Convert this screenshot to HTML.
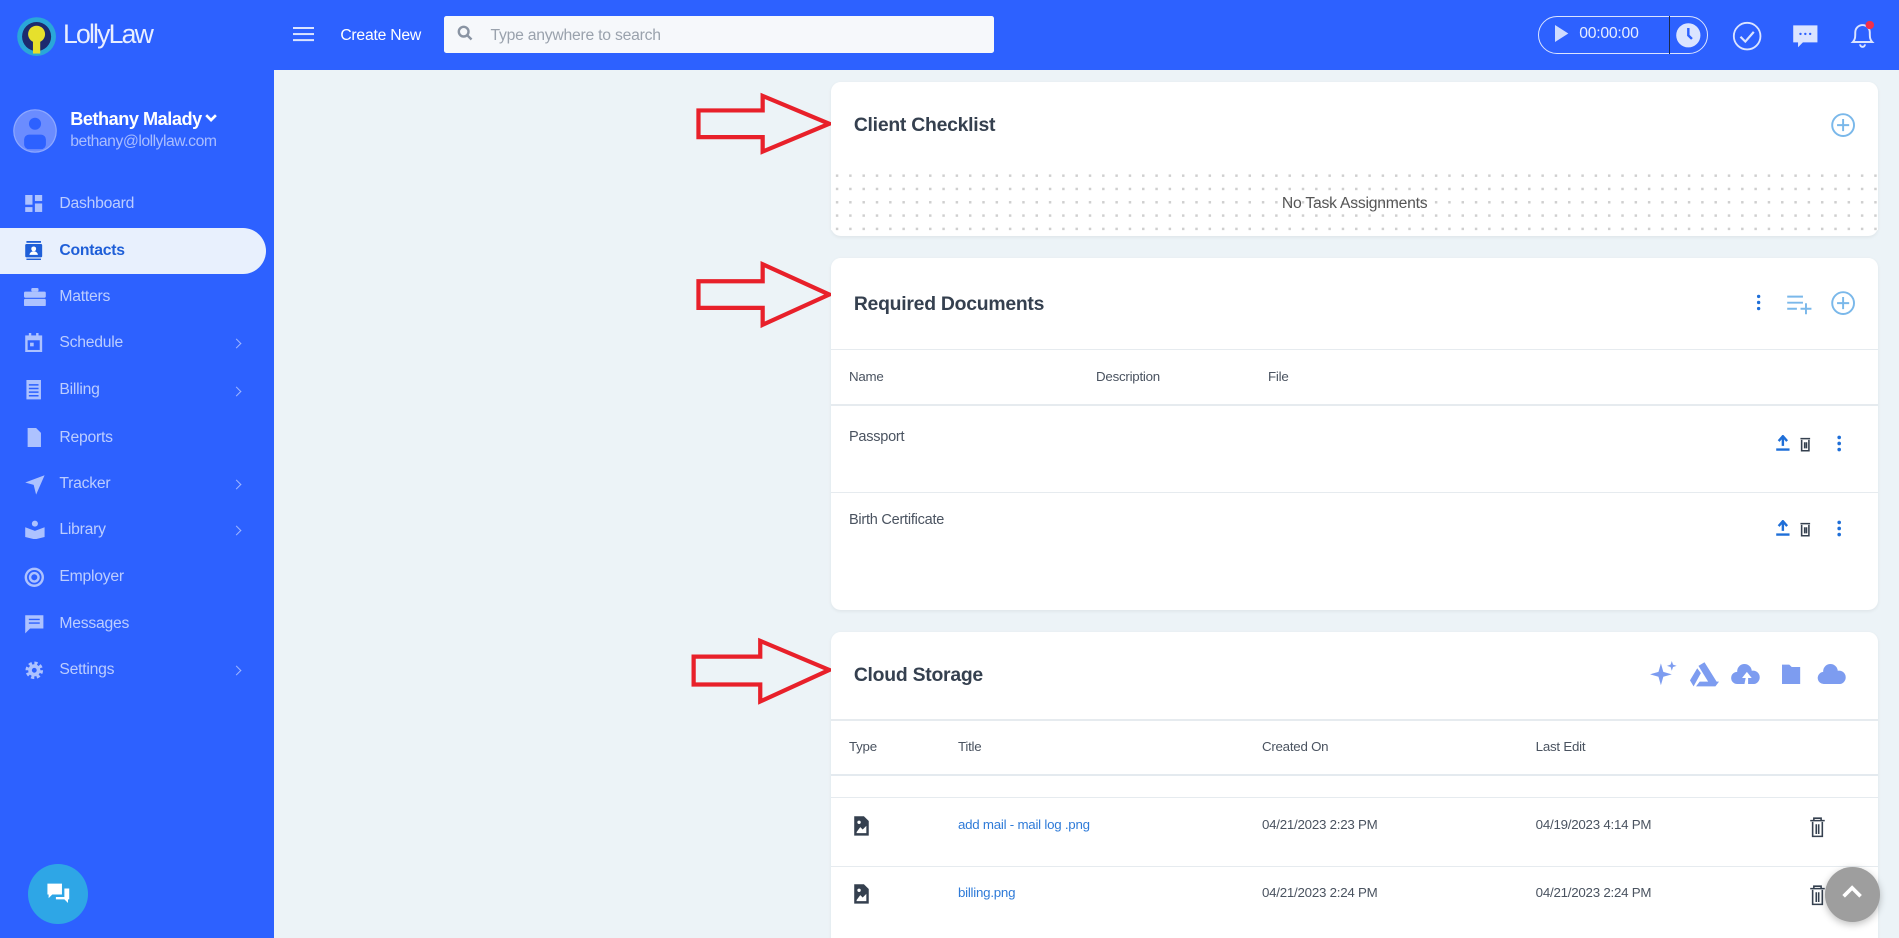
<!DOCTYPE html>
<html><head><meta charset="utf-8"><style>
html,body{margin:0;padding:0;width:1899px;height:938px;overflow:hidden;background:#ecf3f7;}
#w{zoom:1.2111;width:1568px;height:775px;position:relative;font-family:"Liberation Sans",sans-serif;overflow:hidden;background:#ecf3f7;letter-spacing:-0.2px}
.a{position:absolute}
.hdr{left:0;top:0;width:1568px;height:58px;background:#2d61ff}
.sb{left:0;top:58px;width:226px;height:717px;background:#2d61ff}
.mi{position:absolute;left:49px;font-size:13px;color:#bccdff;}
.si{position:absolute;left:20px}
.chev{position:absolute;left:192px;width:5px;height:5px;border-right:1.2px solid #9fb6ff;border-top:1.2px solid #9fb6ff;transform:rotate(45deg)}
.card{position:absolute;left:686px;width:865px;background:#fff;border-radius:8px;box-shadow:0 1px 3px rgba(0,0,0,.06)}
.t{position:absolute;left:19px;font-size:16px;font-weight:bold;color:#35404f}
.hl{position:absolute;left:0;right:0;height:1px;background:#e6ebef}
.th{position:absolute;font-size:11px;color:#4a5360}
.td{position:absolute;font-size:11px;color:#4a5360}
</style></head><body><div id="w">
<div class="a hdr"></div>
<svg class="a" style="left:13px;top:13px" width="36" height="36"><circle cx="17" cy="17" r="16" fill="#2aa7d8"/><circle cx="17" cy="17" r="12" fill="#1c2a6e"/><circle cx="17" cy="15" r="7" fill="#e6e02c"/><rect x="14" y="18" width="6" height="13" fill="#e6e02c"/></svg>
<div class="a" style="left:52px;top:16px;font-size:22px;color:#e8eeff;letter-spacing:-1.5px">LollyLaw</div>
<div class="a" style="left:242px;top:22px;width:17px;height:2px;background:#dbe4ff;box-shadow:0 5px 0 #dbe4ff,0 10px 0 #dbe4ff"></div>
<div class="a" style="left:281px;top:22px;font-size:13px;color:#fff">Create New</div>
<div class="a" style="left:367px;top:13px;width:454px;height:31px;background:#f6f8fb;border-radius:2px"></div>
<svg class="a" style="left:377px;top:21px" width="14" height="14"><circle cx="5.5" cy="5.5" r="4" stroke="#8a94a3" stroke-width="2" fill="none"/><line x1="8.5" y1="8.5" x2="12" y2="12" stroke="#8a94a3" stroke-width="2"/></svg>
<div class="a" style="left:405px;top:22px;font-size:13px;color:#9aa2ad">Type anywhere to search</div>
<div class="a" style="left:1270px;top:13px;width:139px;height:30px;border:1px solid #dbe4ff;border-radius:16px"></div>
<svg class="a" style="left:1284px;top:21px" width="12" height="14"><polygon points="0,0 11,7 0,14" fill="#cfdcff"/></svg>
<div class="a" style="left:1304px;top:21px;font-size:13px;color:#e8eeff">00:00:00</div>
<div class="a" style="left:1378px;top:13px;width:1px;height:32px;background:#1a2a50"></div>
<svg class="a" style="left:1383px;top:18px" width="22" height="22"><circle cx="11" cy="11" r="10" fill="#dbe4ff"/><path d="M11 5v6l3 3" stroke="#2d61ff" stroke-width="2" fill="none"/></svg>
<svg class="a" style="left:1430px;top:17px" width="25" height="25"><circle cx="12.5" cy="12.5" r="11" stroke="#dbe4ff" stroke-width="1.5" fill="none"/><path d="M7 13l4 4 7-8" stroke="#dbe4ff" stroke-width="1.8" fill="none"/></svg>
<svg class="a" style="left:1480px;top:19px" width="22" height="22"><path d="M1 2h20v14H9l-4 4v-4H1z" fill="#dbe4ff"/><circle cx="7" cy="9" r="1" fill="#2d61ff"/><circle cx="11" cy="9" r="1" fill="#2d61ff"/><circle cx="15" cy="9" r="1" fill="#2d61ff"/></svg>
<svg class="a" style="left:1526px;top:16px" width="24" height="26"><path d="M4 19c2-2 2-4 2-8a6 6 0 0 1 12 0c0 4 0 6 2 8z" stroke="#dbe4ff" stroke-width="1.6" fill="none"/><path d="M10 21a2 2 0 0 0 4 0" stroke="#dbe4ff" stroke-width="1.6" fill="none"/><circle cx="18" cy="5" r="3.5" fill="#f2304a"/></svg>

<div class="a sb"></div>
<svg class="a" style="left:10px;top:89px" width="38" height="38"><circle cx="19" cy="19" r="18" fill="#8ea8ff"/><circle cx="19" cy="19" r="17" fill="#6b8cff"/><circle cx="19" cy="13" r="5" fill="#2d61ff"/><rect x="10" y="22" width="18" height="12" rx="4" fill="#2d61ff"/></svg>
<div class="a" style="left:58px;top:90px;font-size:15px;font-weight:bold;color:#fff;letter-spacing:-0.4px">Bethany Malady</div>
<svg class="a" style="left:169px;top:94px" width="10" height="8"><path d="M1 1l4 4 4-4" stroke="#fff" stroke-width="2.2" fill="none"/></svg>
<div class="a" style="left:58px;top:110px;font-size:13px;color:#a9bdff;letter-spacing:-0.4px">bethany@lollylaw.com</div>
<div class="a" style="left:0;top:188px;width:220px;height:38px;background:#e8f0fd;border-radius:0 19px 19px 0"></div>
<svg class="si" style="top:161px" width="16" height="14" fill="#adc2ff"><rect x="1" y="0" width="6" height="8"/><rect x="9" y="0" width="6" height="5"/><rect x="1" y="10" width="6" height="4"/><rect x="9" y="7" width="6" height="7"/></svg>
<div class="mi" style="top:161px">Dashboard</div>
<svg class="si" style="top:199px" width="16" height="16"><rect x="2" y="0" width="12" height="1.5" fill="#1f5fd8"/><rect x="1" y="2.5" width="14" height="11" rx="1" fill="#1f5fd8"/><rect x="2" y="14.5" width="12" height="1.5" fill="#1f5fd8"/><circle cx="8" cy="6.5" r="2" fill="#fff"/><path d="M4.5 11.5a3.5 3 0 0 1 7 0z" fill="#fff"/></svg>
<div class="mi" style="top:200px;color:#1f5fd8;font-weight:bold">Contacts</div>
<svg class="si" style="top:238px" width="18" height="15" fill="#adc2ff"><rect x="6" y="0" width="6" height="3" rx="1"/><rect x="0" y="3" width="18" height="5" rx="1"/><rect x="0" y="9" width="18" height="6" rx="1"/></svg>
<div class="mi" style="top:238px">Matters</div>
<svg class="si" style="top:275px" width="16" height="16"><rect x="2" y="3" width="12" height="12" stroke="#adc2ff" stroke-width="2" fill="none"/><rect x="2" y="3" width="12" height="3" fill="#adc2ff"/><rect x="4" y="0" width="2" height="4" fill="#adc2ff"/><rect x="10" y="0" width="2" height="4" fill="#adc2ff"/><rect x="5" y="8" width="3" height="3" fill="#adc2ff"/></svg>
<div class="mi" style="top:276px">Schedule</div><div class="chev" style="top:281px"></div>
<svg class="si" style="top:314px" width="16" height="16"><rect x="2" y="0" width="12" height="16" fill="#adc2ff"/><path d="M4 4h8M4 7h8M4 10h8M4 13h8" stroke="#2d61ff" stroke-width="1.2"/></svg>
<div class="mi" style="top:315px">Billing</div><div class="chev" style="top:320px"></div>
<svg class="si" style="top:353px" width="16" height="16"><path d="M3 0h7l4 4v12H3z" fill="#adc2ff"/></svg>
<div class="mi" style="top:354px">Reports</div>
<svg class="si" style="top:391px" width="18" height="18"><path d="M17 1L1 7l7 2 2 8z" fill="#adc2ff"/></svg>
<div class="mi" style="top:392px">Tracker</div><div class="chev" style="top:397px"></div>
<svg class="si" style="top:429px" width="18" height="16" fill="#adc2ff"><circle cx="9" cy="3" r="2.5"/><path d="M1 6l8 3 8-3v8l-8 2-8-2z"/></svg>
<div class="mi" style="top:430px">Library</div><div class="chev" style="top:435px"></div>
<svg class="si" style="top:468px" width="17" height="17"><circle cx="8.5" cy="8.5" r="7" stroke="#adc2ff" stroke-width="2" fill="none"/><circle cx="8.5" cy="8.5" r="3.5" stroke="#adc2ff" stroke-width="2" fill="none"/></svg>
<div class="mi" style="top:469px">Employer</div>
<svg class="si" style="top:507px" width="17" height="17"><path d="M1 1h15v11H5l-4 4z" fill="#adc2ff"/><path d="M4 4.5h9M4 7.5h9" stroke="#2d61ff" stroke-width="1.2"/></svg>
<div class="mi" style="top:508px">Messages</div>
<svg class="si" style="top:545px" width="17" height="17"><circle cx="8.5" cy="8.5" r="5.5" stroke="#adc2ff" stroke-width="3.5" stroke-dasharray="2.4 1.9" fill="none"/><circle cx="8.5" cy="8.5" r="5" fill="#adc2ff"/><circle cx="8.5" cy="8.5" r="2" fill="#2d61ff"/></svg>
<div class="mi" style="top:546px">Settings</div><div class="chev" style="top:551px"></div>
<div class="a" style="left:23px;top:713px;width:50px;height:50px;border-radius:50%;background:#2ea6e6"></div>
<svg class="a" style="left:37px;top:727px" width="22" height="22"><path d="M2 3h12v9H6l-3 3v-3H2z" fill="#fff"/><path d="M16 7h4v9h-1v3l-3-3H9v-2h7z" fill="#fff"/></svg>

<svg class="a" style="left:570px;top:70px" width="120" height="520">
<g fill="none" stroke="#e8202a" stroke-width="3.5">
<polygon points="7,21 60,21 60,9 115,32 60,55 60,43 7,43"/>
<polygon points="7,162 60,162 60,148 115,173 60,198 60,184 7,184"/>
<polygon points="3,472 58,472 58,459 115,483 58,509 58,495 3,495"/>
</g></svg>

<div class="card" style="top:68px;height:127px">
<div class="t" style="top:26px">Client Checklist</div>
<svg class="a" style="left:826px;top:25px" width="20" height="20"><circle cx="10" cy="10" r="9" stroke="#7ab8ea" stroke-width="1.6" fill="none"/><path d="M10 5v10M5 10h10" stroke="#7ab8ea" stroke-width="1.6"/></svg>
<div class="a" style="left:0;top:74px;width:865px;height:50px;background-image:linear-gradient(90deg,#cfcfcf 2px,transparent 2px),linear-gradient(#fff 0,#fff 0);background-size:11px 11px;-webkit-mask-image:linear-gradient(#000 2px,transparent 2px);-webkit-mask-size:11px 11px;background-position:4px 2px;-webkit-mask-position:4px 2px"></div>
<div class="a" style="left:0;width:865px;top:93px;text-align:center;font-size:13px;color:#555">No Task Assignments</div>
</div>

<div class="card" style="top:213px;height:291px">
<div class="t" style="top:29px">Required Documents</div>
<svg class="a" style="left:763px;top:30px" width="6" height="14"><circle cx="3" cy="2" r="1.4" fill="#1f6fd8"/><circle cx="3" cy="7" r="1.4" fill="#1f6fd8"/><circle cx="3" cy="12" r="1.4" fill="#1f6fd8"/></svg>
<svg class="a" style="left:789px;top:29px" width="22" height="18"><path d="M1 3h13M1 8h13M1 13h8M12 13h9M16.5 8.5v9" stroke="#7ab8ea" stroke-width="1.6"/></svg>
<svg class="a" style="left:826px;top:27px" width="20" height="20"><circle cx="10" cy="10" r="9" stroke="#7ab8ea" stroke-width="1.6" fill="none"/><path d="M10 5v10M5 10h10" stroke="#7ab8ea" stroke-width="1.6"/></svg>
<div class="hl" style="top:75px"></div>
<div class="th" style="left:15px;top:92px">Name</div><div class="th" style="left:219px;top:92px">Description</div><div class="th" style="left:361px;top:92px">File</div>
<div class="hl" style="top:121px"></div>
<div class="td" style="left:15px;top:141px;font-size:12px">Passport</div>
<div class="hl" style="top:193px"></div>
<div class="td" style="left:15px;top:210px;font-size:12px">Birth Certificate</div>
<svg class="a" style="left:780px;top:146px" width="60" height="14"><path d="M1 12h11M6.5 9V2M3 5l3.5-4 3.5 4" stroke="#1f6fd8" stroke-width="2" fill="none"/><path d="M21 3h8M22 4v9h6V4M24.5 6v5M26 6v5" stroke="#35404f" stroke-width="1.3" fill="none"/><circle cx="53" cy="2" r="1.5" fill="#1f6fd8"/><circle cx="53" cy="7" r="1.5" fill="#1f6fd8"/><circle cx="53" cy="12" r="1.5" fill="#1f6fd8"/></svg>
<svg class="a" style="left:780px;top:216px" width="60" height="14"><path d="M1 12h11M6.5 9V2M3 5l3.5-4 3.5 4" stroke="#1f6fd8" stroke-width="2" fill="none"/><path d="M21 3h8M22 4v9h6V4M24.5 6v5M26 6v5" stroke="#35404f" stroke-width="1.3" fill="none"/><circle cx="53" cy="2" r="1.5" fill="#1f6fd8"/><circle cx="53" cy="7" r="1.5" fill="#1f6fd8"/><circle cx="53" cy="12" r="1.5" fill="#1f6fd8"/></svg>
</div>

<div class="card" style="top:522px;height:270px">
<div class="t" style="top:26px">Cloud Storage</div>
<svg class="a" style="left:676px;top:24px" width="175" height="22" fill="#7d9cf0">
<path d="M9 2l2 7 7 2-7 2-2 7-2-7-7-2 7-2z"/><path d="M18 0l1 3 3 1-3 1-1 3-1-3-3-1 3-1z"/>
<path d="M45 1l10 16h-7l-8-13zM39 6l-6 10 3 5 6-11zM38 21h16l3-4H41z"/>
<path d="M78 19h-6a5 5 0 0 1 0-10 6 6 0 0 1 12-1 5 5 0 0 1 2 11h-5v-5h3l-4-5-4 5h3z"/>
<path d="M109 3h6l2 2h7v14h-15zM115 11h6v2h-6zM117 9h2v6h-2z"/>
<path d="M144 19a5 5 0 0 1-1-10 6 6 0 0 1 12-1 5 5 0 0 1 2 11z"/>
</svg>
<div class="hl" style="top:72px"></div>
<div class="th" style="left:15px;top:88px">Type</div><div class="th" style="left:105px;top:88px">Title</div><div class="th" style="left:356px;top:88px">Created On</div><div class="th" style="left:582px;top:88px">Last Edit</div>
<div class="hl" style="top:117px;height:2px;background:#e4eaef"></div>
<div class="hl" style="top:136px"></div>
<svg class="a" style="left:18px;top:151px" width="14" height="18"><path d="M1 1h8l4 4v12H1z" fill="#35404f"/><path d="M3 14l3-4 2 2 3-3v6H3z" fill="#fff"/><circle cx="5" cy="6" r="1.4" fill="#fff"/></svg>
<div class="td" style="left:105px;top:153px;color:#2f7bd8">add mail - mail log .png</div>
<div class="td" style="left:356px;top:153px">04/21/2023 2:23 PM</div>
<div class="td" style="left:582px;top:153px">04/19/2023 4:14 PM</div>
<svg class="a" style="left:808px;top:153px" width="14" height="17"><path d="M1 3h12M4 3V1h6v2M3 4v12h8V4M6 6v8M8 6v8" stroke="#35404f" stroke-width="1.3" fill="none"/></svg>
<div class="hl" style="top:193px"></div>
<svg class="a" style="left:18px;top:207px" width="14" height="18"><path d="M1 1h8l4 4v12H1z" fill="#35404f"/><path d="M3 14l3-4 2 2 3-3v6H3z" fill="#fff"/><circle cx="5" cy="6" r="1.4" fill="#fff"/></svg>
<div class="td" style="left:105px;top:209px;color:#2f7bd8">billing.png</div>
<div class="td" style="left:356px;top:209px">04/21/2023 2:24 PM</div>
<div class="td" style="left:582px;top:209px">04/21/2023 2:24 PM</div>
<svg class="a" style="left:808px;top:209px" width="14" height="17"><path d="M1 3h12M4 3V1h6v2M3 4v12h8V4M6 6v8M8 6v8" stroke="#35404f" stroke-width="1.3" fill="none"/></svg>
</div>
<div class="a" style="left:1507px;top:716px;width:45px;height:45px;border-radius:50%;background:#9e9e9e;box-shadow:0 2px 6px rgba(0,0,0,.25)"></div>
<svg class="a" style="left:1519px;top:729px" width="20" height="14"><path d="M3 11l7-7 7 7" stroke="#fff" stroke-width="3" fill="none"/></svg>
</div></body></html>
